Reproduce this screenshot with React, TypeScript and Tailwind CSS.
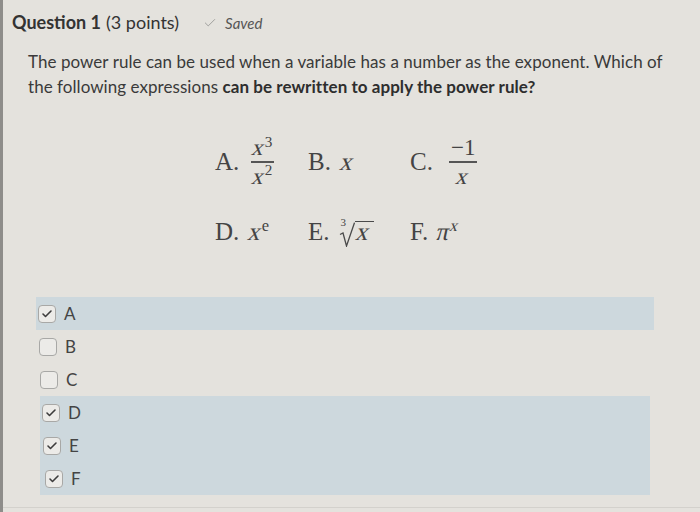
import { Check } from "lucide-react";

type Option = {
  letter: string;
  checked: boolean;
  row: string; // row offset + width
  box: string; // checkbox offset inside the row
};

const options: Option[] = [
  { letter: "A", checked: true, row: "ml-[33px] w-[618px]", box: "pl-[2px]" },
  { letter: "B", checked: false, row: "ml-[35px] w-[616px]", box: "pl-[1px]" },
  { letter: "C", checked: false, row: "ml-[35px] w-[614px]", box: "pl-[2px]" },
  { letter: "D", checked: true, row: "ml-[37px] w-[610px]", box: "pl-[2px]" },
  { letter: "E", checked: true, row: "ml-[37px] w-[610px]", box: "pl-[3px]" },
  { letter: "F", checked: true, row: "ml-[37px] w-[610px]", box: "pl-[5px]" },
];

/** Stacked fraction, bar centred on the row's middle line. */
function Frac({ top, bottom }: { top: React.ReactNode; bottom: React.ReactNode }) {
  return (
    <span className="inline-flex flex-col items-center text-[23px] leading-[27px]">
      <span className="px-[2px]">{top}</span>
      <span className="h-[1.5px] w-full bg-[#555]" />
      <span className="px-[2px]">{bottom}</span>
    </span>
  );
}

// math italic x: the serif italic face isn't available, so slant the upright one
function X() {
  return <span className="inline-block -skew-x-[16deg] font-['Liberation_Serif',serif] not-italic">x</span>;
}

function Sup({ children }: { children: React.ReactNode }) {
  return <span className="relative -top-[0.55em] align-baseline text-[0.66em] leading-none">{children}</span>;
}

function CubeRoot() {
  return (
    <span className="relative inline-block pl-[17px] leading-[20px]">
      <span className="absolute left-[3px] top-[-4px] text-[11px] leading-none">3</span>
      <svg width="17" height="25" viewBox="0 0 17 25" className="absolute bottom-[-5px] left-0">
        <path d="M2 12.5 L5 11 L8.5 24 L16.5 0.7" fill="none" stroke="#4a4a4a" strokeWidth="1.3" />
      </svg>
      <span className="inline-block border-t-[1.3px] border-[#4a4a4a] pl-[2px] pr-[5px] leading-[20px]">
        <X />
      </span>
    </span>
  );
}

function Checkbox({ checked }: { checked: boolean }) {
  return (
    <span className="flex h-[18px] w-[18px] items-center justify-center rounded-[4px] border-[1.5px] border-[#a8a8a6] bg-[#ecebe8]">
      {checked && <Check size={12} strokeWidth={3.2} className="text-[#3d3d3d]" />}
    </span>
  );
}

export default function App() {
  return (
    <div className="relative h-[512px] w-[700px] overflow-hidden border-l-[3px] border-[#8e8d8a] bg-[#e4e2dd] font-['Lato',sans-serif] text-[#333]">
      <div className="flex items-baseline pl-[9px] pt-[10px] text-[18px] leading-[24px]">
        <span className="font-bold">Question 1</span>
        <span className="ml-[5px]">(3 points)</span>
        <Check size={14} strokeWidth={1.6} className="ml-[24px] self-center text-[#9a9a98]" />
        <span className="ml-[8px] text-[15px] italic text-[#555]">Saved</span>
      </div>

      <p className="mt-[14px] pl-[25px] text-[17px] leading-[25px] tracking-[0.05px] text-[#3a3a3a]">
        The power rule can be used when a variable has a number as the exponent. Which of
        <br />
        the following expressions <b className="font-bold text-[#2e2e2e]">can be rewritten to apply the power rule?</b>
      </p>

      <div className="ml-[212px] mt-[28px] font-['Liberation_Serif','DejaVu_Serif',serif] text-[25px] text-[#444]">
        <div className="flex h-[70px] items-center">
          <span className="flex w-[93px] items-center gap-[12px]">
            A.
            <Frac
              top={
                <>
                  <X />
                  <Sup>3</Sup>
                </>
              }
              bottom={
                <>
                  <X />
                  <Sup>2</Sup>
                </>
              }
            />
          </span>
          <span className="flex w-[102px] items-center gap-[10px]">
            B. <X />
          </span>
          <span className="flex items-center gap-[16px]">
            C.
            <Frac top={<span>−1</span>} bottom={<X />} />
          </span>
        </div>
        <div className="flex h-[70px] items-center">
          <span className="flex w-[93px] items-baseline gap-[10px]">
            D.
            <span>
              <X />
              <Sup>e</Sup>
            </span>
          </span>
          <span className="flex w-[102px] items-baseline gap-[8px]">
            E. <CubeRoot />
          </span>
          <span className="flex items-baseline gap-[9px]">
            F.
            <span>
              <span className="inline-block -skew-x-[12deg]">π</span>
              <Sup>
                <X />
              </Sup>
            </span>
          </span>
        </div>
      </div>

      <div className="mt-[30px]">
        {options.map((o) => (
          <div
            key={o.letter}
            className={`flex h-[33px] items-center ${o.row} ${o.box} ${o.checked ? "bg-[#cdd8dd]" : ""}`}
          >
            <Checkbox checked={o.checked} />
            <span className="ml-[8px] text-[17px] text-[#444]">{o.letter}</span>
          </div>
        ))}
      </div>

      <div className="absolute bottom-[4px] left-0 h-px w-full bg-[#d3d1cc]" />
    </div>
  );
}
